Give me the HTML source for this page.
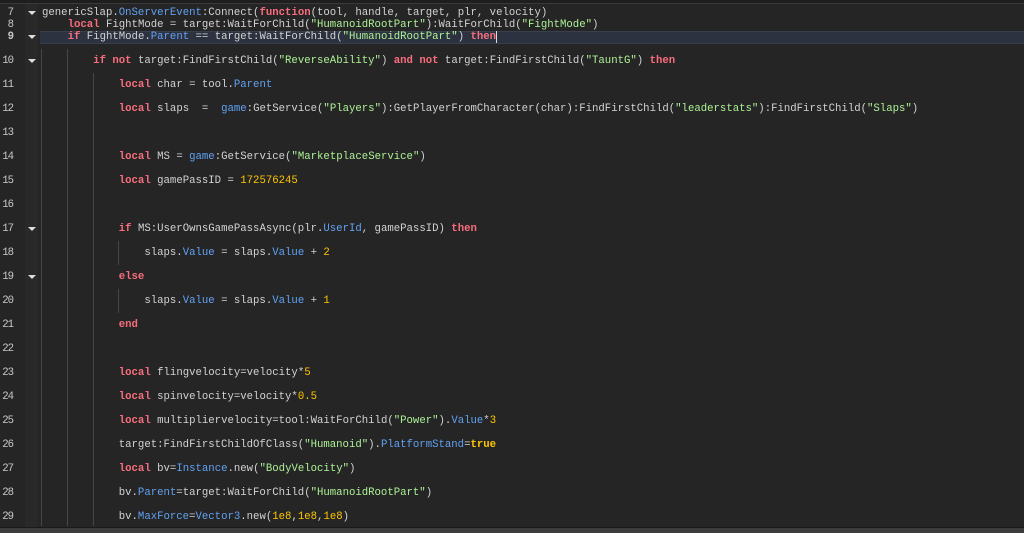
<!DOCTYPE html>
<html><head><meta charset="utf-8"><style>
*{margin:0;padding:0;box-sizing:border-box}
html,body{width:1024px;height:533px;overflow:hidden;background:#252526}
#top{position:absolute;left:0;top:0;width:1024px;height:4px;background:#1e1e1e;border-bottom:1px solid #3a3a3a}
#gut{position:absolute;left:0;top:4px;width:25px;height:523px;background:#252526}
#fold{position:absolute;left:25px;top:4px;width:13px;height:523px;background:#292929}
#bot{position:absolute;left:0;top:527px;width:1024px;height:6px;background:#3c3c3c;border-top:1px solid #1a1a1a}
#hl{position:absolute;left:40px;top:31px;width:984px;height:13px;background:#2d3240;border-top:1px solid #3a3f4c;border-bottom:1px solid #3a3f4c}
.l{position:absolute;left:42px;font:10.67px/12px "Liberation Mono",monospace;color:#d2d2d2;white-space:pre}
.n{position:absolute;left:0;width:13px;text-align:right;font:10.67px/12px "Liberation Mono",monospace;color:#c8c8c8;letter-spacing:-1px}
.f{position:absolute;left:28px;width:0;height:0;border-left:4px solid transparent;border-right:4px solid transparent;border-top:4px solid #ddd}
.g{position:absolute;width:1px;background:#474747}
.k{color:#f86d7c;font-weight:bold}.s{color:#adf195}.p{color:#61a1f1}.d{color:#ffc600}.t{color:#ffc600;font-weight:bold}
</style></head><body>
<div id="top"></div><div id="gut"></div><div id="fold"></div>
<div id="hl"></div>
<div class="g" style="left:41px;top:49px;height:477px"></div>
<div class="g" style="left:67px;top:49px;height:477px"></div>
<div class="g" style="left:93px;top:73px;height:453px"></div>
<div class="g" style="left:118px;top:241px;height:24px"></div>
<div class="g" style="left:118px;top:289px;height:24px"></div>
<div id="bot"></div>

<div class="n" style="top:7px">7</div><div class="f" style="top:11px"></div>
<div class="l" style="top:7px">genericSlap.<span class="p">OnServerEvent</span>:Connect(<span class="k">function</span>(tool, handle, target, plr, velocity)</div>
<div class="n" style="top:19px">8</div>
<div class="l" style="top:19px">    <span class="k">local</span> FightMode = target:WaitForChild(<span class="s">"HumanoidRootPart"</span>):WaitForChild(<span class="s">"FightMode"</span>)</div>
<div class="n" style="top:31px;font-weight:bold">9</div><div class="f" style="top:35px"></div>
<div class="l" style="top:31px">    <span class="k">if</span> FightMode.<span class="p">Parent</span> == target:WaitForChild(<span class="s">"HumanoidRootPart"</span>) <span class="k">then</span><span style="border-left:1px solid #ddd"></span></div>

<div class="n" style="top:55px">10</div><div class="f" style="top:59px"></div>
<div class="l" style="top:55px">        <span class="k">if not</span> target:FindFirstChild(<span class="s">"ReverseAbility"</span>) <span class="k">and not</span> target:FindFirstChild(<span class="s">"TauntG"</span>) <span class="k">then</span></div>
<div class="n" style="top:79px">11</div>
<div class="l" style="top:79px">            <span class="k">local</span> char = tool.<span class="p">Parent</span></div>
<div class="n" style="top:103px">12</div>
<div class="l" style="top:103px">            <span class="k">local</span> slaps  =  <span class="p">game</span>:GetService(<span class="s">"Players"</span>):GetPlayerFromCharacter(char):FindFirstChild(<span class="s">"leaderstats"</span>):FindFirstChild(<span class="s">"Slaps"</span>)</div>
<div class="n" style="top:127px">13</div>
<div class="n" style="top:151px">14</div>
<div class="l" style="top:151px">            <span class="k">local</span> MS = <span class="p">game</span>:GetService(<span class="s">"MarketplaceService"</span>)</div>
<div class="n" style="top:175px">15</div>
<div class="l" style="top:175px">            <span class="k">local</span> gamePassID = <span class="d">172576245</span></div>
<div class="n" style="top:199px">16</div>
<div class="n" style="top:223px">17</div><div class="f" style="top:227px"></div>
<div class="l" style="top:223px">            <span class="k">if</span> MS:UserOwnsGamePassAsync(plr.<span class="p">UserId</span>, gamePassID) <span class="k">then</span></div>
<div class="n" style="top:247px">18</div>
<div class="l" style="top:247px">                slaps.<span class="p">Value</span> = slaps.<span class="p">Value</span> + <span class="d">2</span></div>
<div class="n" style="top:271px">19</div><div class="f" style="top:275px"></div>
<div class="l" style="top:271px">            <span class="k">else</span></div>
<div class="n" style="top:295px">20</div>
<div class="l" style="top:295px">                slaps.<span class="p">Value</span> = slaps.<span class="p">Value</span> + <span class="d">1</span></div>
<div class="n" style="top:319px">21</div>
<div class="l" style="top:319px">            <span class="k">end</span></div>
<div class="n" style="top:343px">22</div>
<div class="n" style="top:367px">23</div>
<div class="l" style="top:367px">            <span class="k">local</span> flingvelocity=velocity*<span class="d">5</span></div>
<div class="n" style="top:391px">24</div>
<div class="l" style="top:391px">            <span class="k">local</span> spinvelocity=velocity*<span class="d">0.5</span></div>
<div class="n" style="top:415px">25</div>
<div class="l" style="top:415px">            <span class="k">local</span> multipliervelocity=tool:WaitForChild(<span class="s">"Power"</span>).<span class="p">Value</span>*<span class="d">3</span></div>
<div class="n" style="top:439px">26</div>
<div class="l" style="top:439px">            target:FindFirstChildOfClass(<span class="s">"Humanoid"</span>).<span class="p">PlatformStand</span>=<span class="t">true</span></div>
<div class="n" style="top:463px">27</div>
<div class="l" style="top:463px">            <span class="k">local</span> bv=<span class="p">Instance</span>.new(<span class="s">"BodyVelocity"</span>)</div>
<div class="n" style="top:487px">28</div>
<div class="l" style="top:487px">            bv.<span class="p">Parent</span>=target:WaitForChild(<span class="s">"HumanoidRootPart"</span>)</div>
<div class="n" style="top:511px">29</div>
<div class="l" style="top:511px">            bv.<span class="p">MaxForce</span>=<span class="p">Vector3</span>.new(<span class="d">1e8</span>,<span class="d">1e8</span>,<span class="d">1e8</span>)</div>
</body></html>
